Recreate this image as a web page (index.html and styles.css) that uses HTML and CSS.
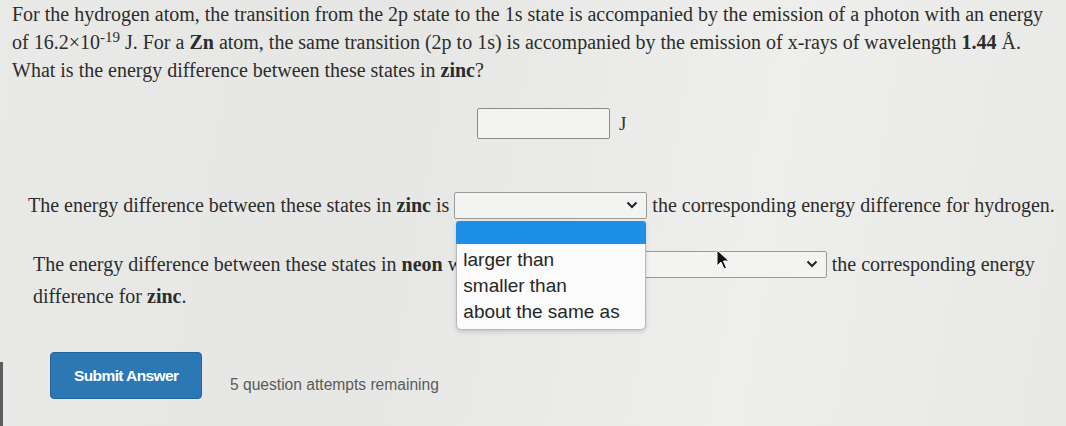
FILE: index.html
```html
<!DOCTYPE html>
<html>
<head>
<meta charset="utf-8">
<link rel="stylesheet" href="styles.css">
</head>
<body>
<div class="page">
  <p class="question">For the hydrogen atom, the transition from the 2p state to the 1s state is accompanied by the emission of a photon with an energy of 16.2×10<sup>-19</sup> J. For a <b>Zn</b> atom, the same transition (2p to 1s) is accompanied by the emission of x-rays of wavelength <b>1.44</b> Å. What is the energy difference between these states in <b>zinc</b>?</p>

  <div class="answer-row">
    <span class="num-input"></span>
    <span class="unit">J</span>
  </div>

  <p class="sentence s1">The energy difference between these states in <b>zinc</b> is <span class="select sel1"><span class="chev"><svg width="12" height="8" viewBox="0 0 12 8"><path d="M1.5 1.5 L6 6 L10.5 1.5" fill="none" stroke="#222" stroke-width="2"/></svg></span><span class="dropdown"><span class="opt hl"></span><span class="opt">larger than</span><span class="opt">smaller than</span><span class="opt">about the same as</span></span></span> the corresponding energy difference for hydrogen.</p>

  <p class="sentence s2">The energy difference between these states in <b>neon</b> was <span class="select sel2"><span class="chev"><svg width="12" height="8" viewBox="0 0 12 8"><path d="M1.5 1.5 L6 6 L10.5 1.5" fill="none" stroke="#222" stroke-width="2"/></svg></span></span> the corresponding energy difference for <b>zinc</b>.</p>

  <div class="actions">
    <span class="btn">Submit Answer</span>
    <span class="remaining">5 question attempts remaining</span>
  </div>

  <svg class="cursor" width="16" height="22" viewBox="0 0 16 22"><path d="M2 1 L2 17 L6 13 L9 20 L11.5 19 L8.5 12 L14 12 Z" fill="#111" stroke="#fff" stroke-width="1"/></svg>
  <span class="bezel"></span>
</div>
</body>
</html>
```

FILE: styles.css
```css
html, body {
  margin: 0;
  padding: 0;
}
body {
  width: 1066px;
  height: 426px;
  overflow: hidden;
  background: linear-gradient(100deg, #e9eae7 0%, #e6e7e4 35%, #eeefec 70%, #e8e9e6 100%);
  font-family: "Liberation Serif", "Times New Roman", serif;
  color: #2c2c2c;
}
.page {
  position: relative;
  height: 426px;
  padding-left: 3px;
  box-sizing: border-box;
}
.bezel {
  position: absolute;
  left: 0;
  top: 362px;
  width: 3px;
  height: 64px;
  background: #5e5e5e;
}
.question {
  margin: 0;
  padding: 0 0 0 9px;
  width: 1045px;
  font-size: 20px;
  line-height: 28px;
}
.question sup {
  font-size: 15px;
  line-height: 0;
  vertical-align: 7px;
}
.answer-row {
  display: flex;
  align-items: center;
  margin-top: 24px;
  padding-left: 474px;
  gap: 9px;
}
.num-input {
  display: block;
  width: 131px;
  height: 29px;
  border: 1px solid #8a8a8a;
  border-radius: 2px;
  background: #f3f4f2;
}
.unit {
  font-size: 19px;
  color: #333;
}
.sentence {
  margin: 0;
  font-size: 20px;
  line-height: 30px;
}
.s1 {
  margin-top: 51px;
  padding-left: 25px;
}
.s2 {
  margin-top: 28px;
  padding-left: 30px;
  width: 1015px;
  line-height: 32px;
}
.select {
  position: relative;
  display: inline-block;
  vertical-align: middle;
  height: 27px;
  border: 1px solid #9a9a9a;
  border-radius: 2px;
  background: #f3f4f2;
  box-sizing: border-box;
}
.sel1 {
  width: 193px;
  margin-top: -4px;
}
.sel2 {
  width: 343px;
  margin-top: -4px;
}
.chev {
  position: absolute;
  right: 8px;
  top: 8px;
  display: flex;
}
.dropdown {
  position: absolute;
  left: 1px;
  top: 28px;
  width: 188px;
  background: #fbfbfb;
  border: 1px solid #b8b8b8;
  border-radius: 0 0 5px 5px;
  box-shadow: 0 2px 4px rgba(0,0,0,0.15);
  z-index: 5;
  display: flex;
  flex-direction: column;
  font-family: "Liberation Sans", Arial, sans-serif;
  font-size: 19px;
  color: #262626;
  padding-bottom: 4px;
}
.opt {
  display: block;
  height: 26px;
  line-height: 26px;
  padding-left: 6px;
  white-space: nowrap;
}
.opt.hl {
  height: 23px;
  margin: -1px -1px 3px -1px;
  background: #1e8fe6;
  border-radius: 4px 4px 0 0;
}
.actions {
  display: flex;
  align-items: flex-start;
  margin-top: 40px;
  padding-left: 47px;
  gap: 28px;
}
.btn {
  display: block;
  width: 152px;
  height: 47px;
  box-sizing: border-box;
  padding: 14px 0 0 23px;
  background: #2b78b5;
  border: 1px solid #22659a;
  border-radius: 4px;
  color: #fff;
  font-family: "Liberation Sans", Arial, sans-serif;
  font-weight: bold;
  font-size: 15.5px;
  letter-spacing: -0.6px;
}
.remaining {
  margin-top: 24px;
  font-family: "Liberation Sans", Arial, sans-serif;
  font-size: 15.6px;
  color: #5a5a5a;
}
.cursor {
  position: absolute;
  left: 715px;
  top: 249px;
}
```
